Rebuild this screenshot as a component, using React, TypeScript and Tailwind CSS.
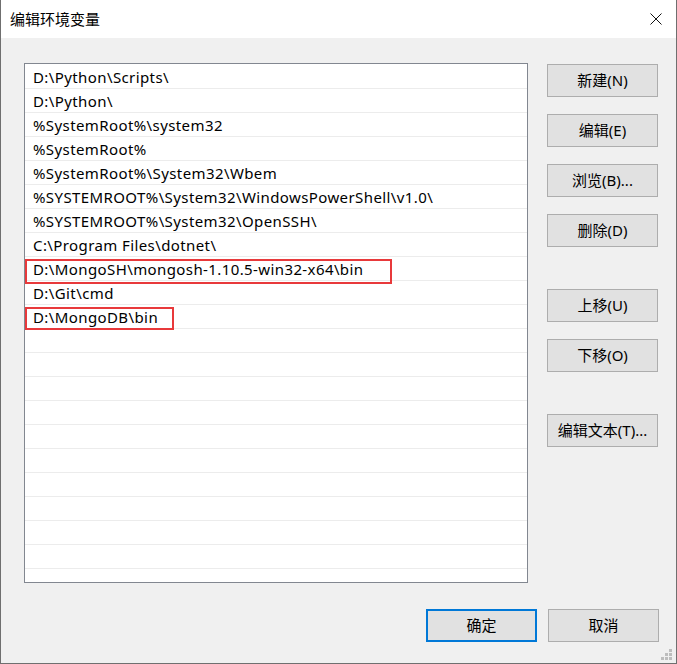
import React from "react";

const rows = [
  "D:\\Python\\Scripts\\",
  "D:\\Python\\",
  "%SystemRoot%\\system32",
  "%SystemRoot%",
  "%SystemRoot%\\System32\\Wbem",
  "%SYSTEMROOT%\\System32\\WindowsPowerShell\\v1.0\\",
  "%SYSTEMROOT%\\System32\\OpenSSH\\",
  "C:\\Program Files\\dotnet\\",
  "D:\\MongoSH\\mongosh-1.10.5-win32-x64\\bin",
  "D:\\Git\\cmd",
  "D:\\MongoDB\\bin",
];

const font = { fontFamily: '"Noto Sans", "Noto Sans CJK SC", sans-serif' };

function Btn({ label, focused }: { label: string; focused?: boolean }) {
  return (
    <div
      className={
        "w-[111px] h-[33px] flex items-center justify-center bg-[#e1e1e1] text-[15px] text-black " +
        (focused ? "border-2 border-[#0078d7]" : "border border-[#adadad]")
      }
    >
      {label}
    </div>
  );
}

export default function App() {
  const all = [...rows, ...Array.from({ length: 11 }, () => "")];
  return (
    <div
      className="w-[677px] h-[664px] flex flex-col border-l border-r border-b border-[#6f6f6f] bg-[#f0f0f0] relative overflow-hidden"
      style={font}
    >
      <div className="h-[38px] bg-white flex items-center justify-between shrink-0">
        <span className="pl-[9px] text-[15px] text-black">编辑环境变量</span>
        <svg width="12" height="12" viewBox="0 0 12 12" className="mr-[14px]">
          <path d="M0.5 0.5 L11.5 11.5 M11.5 0.5 L0.5 11.5" stroke="#111" strokeWidth="1" />
        </svg>
      </div>
      <div className="flex-1 flex flex-col pl-[23px] pt-[25px]">
        <div className="flex items-start gap-[19px]">
          <div className="relative w-[504px] h-[520px] border border-[#828790] bg-white overflow-hidden pt-[1px]">
            {all.map((t, i) => (
              <div
                key={i}
                className="h-[24px] border-b border-[#ececec] pl-[8px] pt-[2px] text-[15px] leading-[21px] tracking-[0.4px] text-black whitespace-nowrap"
              >
                {t}
              </div>
            ))}
            <div className="absolute left-0 top-[195px] w-[367px] h-[25px] border-2 border-[#e8393b]" />
            <div className="absolute left-0 top-[243px] w-[149px] h-[23px] border-2 border-[#e8393b]" />
          </div>
          <div className="flex flex-col pt-[1px]">
            <Btn label="新建(N)" />
            <div className="h-[17px]" />
            <Btn label="编辑(E)" />
            <div className="h-[17px]" />
            <Btn label="浏览(B)..." />
            <div className="h-[17px]" />
            <Btn label="删除(D)" />
            <div className="h-[42px]" />
            <Btn label="上移(U)" />
            <div className="h-[17px]" />
            <Btn label="下移(O)" />
            <div className="h-[42px]" />
            <Btn label="编辑文本(T)..." />
          </div>
        </div>
        <div className="flex justify-end gap-[11px] mt-[26px] pr-[17px]">
          <Btn label="确定" focused />
          <Btn label="取消" />
        </div>
      </div>
      <div className="absolute right-[4px] bottom-[3px] grid grid-cols-3 gap-[1px]">
        <div className="w-[3px] h-[3px]" />
        <div className="w-[3px] h-[3px]" />
        <div className="w-[3px] h-[3px] bg-[#bdbdbd]" />
        <div className="w-[3px] h-[3px]" />
        <div className="w-[3px] h-[3px] bg-[#bdbdbd]" />
        <div className="w-[3px] h-[3px] bg-[#bdbdbd]" />
        <div className="w-[3px] h-[3px] bg-[#bdbdbd]" />
        <div className="w-[3px] h-[3px] bg-[#bdbdbd]" />
        <div className="w-[3px] h-[3px] bg-[#bdbdbd]" />
      </div>
    </div>
  );
}
